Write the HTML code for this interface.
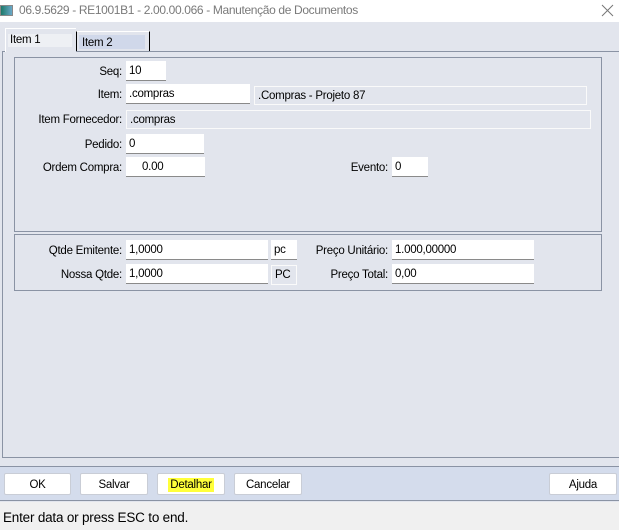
<!DOCTYPE html>
<html><head><meta charset="utf-8"><style>
*{box-sizing:border-box;margin:0;padding:0}
body{width:619px;height:530px;position:relative;background:#e2e5ed;font-family:"Liberation Sans",sans-serif;font-size:11.5px;letter-spacing:-0.25px;color:#000;overflow:hidden}
.a{position:absolute}
.title{left:0;top:0;width:619px;height:22px;background:#fff}
.title span{position:absolute;left:19px;top:3px;font-size:12px;letter-spacing:-0.35px;color:#7a7a7a}
.inp{position:absolute;background:#fff;border-bottom:1px solid #8a8a8a;height:20px;padding:4px 0 0 3px;white-space:nowrap}
.ro{position:absolute;background:#e2e5ed;border:1px solid #fafafa;height:19px;padding:3px 0 0 3px;white-space:nowrap}
.lbl{position:absolute;text-align:right;white-space:nowrap;margin-top:1px}
.btn{position:absolute;top:473px;height:22px;background:#fff;border:1px solid #c9cdd6;border-radius:2px;text-align:center;padding-top:5px}
</style></head><body>
<div class="a title"><div class="a" style="left:0;top:5px;width:13px;height:11px;background:linear-gradient(90deg,#1d7a6a,#6aa8c8);border:1px solid #888"></div><span>06.9.5629 - RE1001B1 - 2.00.00.066 - Manutenção de Documentos</span>
<svg class="a" style="left:601px;top:4px" width="13" height="13"><path d="M1 1L12 12M12 1L1 12" stroke="#777" stroke-width="1"/></svg></div>

<div class="a" style="left:2px;top:51px;width:617px;height:407px;border:1px solid #8a93a4;border-right:none"></div>
<div class="a" style="left:5px;top:28px;width:71px;height:24px;background:#e2e5ed;border-top:1px solid #fff;border-left:1px solid #fff"></div>
<div class="a" style="left:8px;top:34px;width:64px;height:13px;background:#eef0f4"></div>
<div class="a" style="left:10px;top:34px">Item 1</div>
<div class="a" style="left:76px;top:31px;width:74px;height:20px;border-left:1px solid #000;border-right:1px solid #000;border-top:1px solid #fff"></div>
<div class="a" style="left:79px;top:35px;width:66px;height:14px;background:#d0d8ea"></div>
<div class="a" style="left:82px;top:37px">Item 2</div>

<div class="a" style="left:14px;top:57px;width:588px;height:175px;border:1px solid #8a93a4"></div>
<div class="a" style="left:14px;top:234px;width:588px;height:57px;border:1px solid #8a93a4"></div>

<div class="lbl" style="right:497px;top:65px">Seq:</div><div class="inp" style="left:126px;top:61px;width:40px">10</div>
<div class="lbl" style="right:497px;top:88px">Item:</div><div class="inp" style="left:126px;top:84px;width:124px">.compras</div>
<div class="ro" style="left:254px;top:86px;width:333px">.Compras - Projeto 87</div>
<div class="lbl" style="right:497px;top:113px">Item Fornecedor:</div><div class="ro" style="left:126px;top:110px;width:465px">.compras</div>
<div class="lbl" style="right:497px;top:138px">Pedido:</div><div class="inp" style="left:126px;top:134px;width:78px">0</div>
<div class="lbl" style="right:497px;top:161px">Ordem Compra:</div><div class="inp" style="left:126px;top:157px;width:79px;padding-left:16px">0.00</div>
<div class="lbl" style="right:231px;top:161px">Evento:</div><div class="inp" style="left:392px;top:157px;width:36px">0</div>

<div class="lbl" style="right:497px;top:244px">Qtde Emitente:</div><div class="inp" style="left:126px;top:240px;width:142px">1,0000</div>
<div class="inp" style="left:271px;top:240px;width:26px">pc</div>
<div class="lbl" style="right:231px;top:244px">Preço Unitário:</div><div class="inp" style="left:392px;top:240px;width:142px">1.000,00000</div>
<div class="lbl" style="right:497px;top:268px">Nossa Qtde:</div><div class="inp" style="left:126px;top:264px;width:142px">1,0000</div>
<div class="ro" style="left:271px;top:265px;width:26px;height:20px">PC</div>
<div class="lbl" style="right:231px;top:268px">Preço Total:</div><div class="inp" style="left:392px;top:264px;width:142px">0,00</div>

<div class="a" style="left:0;top:466px;width:619px;height:35px;background:#d4dcec;border-top:1px solid #8a93a4;border-bottom:1px solid #8a93a4"></div>
<div class="btn" style="left:4px;width:67px">OK</div>
<div class="btn" style="left:80px;width:68px">Salvar</div>
<div class="btn" style="left:157px;width:68px"><span style="background:#ffff3a;padding:1px 2px">Detalhar</span></div>
<div class="btn" style="left:234px;width:68px">Cancelar</div>
<div class="btn" style="left:549px;width:68px">Ajuda</div>
<div class="a" style="left:0;top:502px;width:619px;height:28px;background:#f0f0f0"></div>
<div class="a" style="left:3px;top:510px;font-size:13.5px;letter-spacing:-0.2px">Enter data or press ESC to end.</div>
</body></html>
